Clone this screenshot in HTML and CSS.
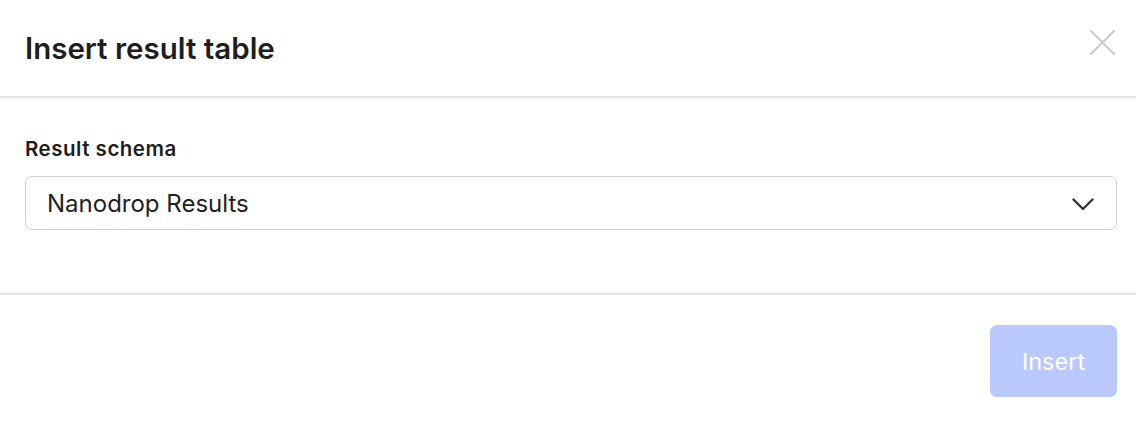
FILE: index.html
```html
<!DOCTYPE html>
<html>
<head>
<meta charset="utf-8">
<link rel="stylesheet" href="styles.css">
</head>
<body>
<div class="dialog">
  <div class="header">
    <h1 class="title">Insert result table</h1>
    <button class="close" aria-label="Close">
      <svg width="25" height="25" viewBox="0 0 25 25"><path d="M1 1L24 24M24 1L1 24" stroke="#cccccc" stroke-width="2.2" stroke-linecap="round" fill="none"/></svg>
    </button>
  </div>
  <div class="body">
    <label class="label">Result schema</label>
    <div class="select">
      <span class="select-value">Nanodrop Results</span>
      <svg class="chevron" width="22" height="13" viewBox="0 0 22 13"><path d="M1.5 1.5L11 11L20.5 1.5" stroke="#333" stroke-width="2.4" fill="none" stroke-linecap="round" stroke-linejoin="round"/></svg>
    </div>
  </div>
  <div class="footer">
    <button class="insert">Insert</button>
  </div>
</div>
</body>
</html>
```

FILE: styles.css
```css
html, body {
  margin: 0;
  padding: 0;
  background: #ffffff;
}
body {
  font-family: "Inter", "Open Sans", sans-serif;
  color: #1f1f21;
}
.dialog {
  width: 1136px;
  height: 426px;
  display: flex;
  flex-direction: column;
}
.header {
  height: 96px;
  border-bottom: 2px solid #e3e3e3;
  display: flex;
  align-items: center;
  justify-content: space-between;
  padding: 0 21px 0 25px;
  box-sizing: content-box;
}
.title {
  margin: 0;
  font-size: 29.5px;
  font-weight: 600;
  letter-spacing: 0;
  color: #1e1e20;
  line-height: 1;
  padding-top: 2px;
}
.close {
  border: 0;
  background: none;
  padding: 0;
  width: 25px;
  height: 25px;
  display: flex;
  align-self: flex-start;
  margin-top: 30px;
}
.body {
  height: 195px;
  padding: 0 19px 0 25px;
  border-bottom: 2px solid #e3e3e3;
}
.label {
  display: block;
  margin-top: 40px;
  font-size: 20.5px;
  font-weight: 600;
  letter-spacing: 0.5px;
  line-height: 22px;
  color: #1e1e20;
}
.select {
  margin-top: 16px;
  height: 54px;
  box-sizing: border-box;
  border: 1.5px solid #d0d0d0;
  border-radius: 7px;
  display: flex;
  align-items: center;
  justify-content: space-between;
  padding: 0 22px 0 21px;
}
.select-value {
  font-size: 24px;
  color: #222;
}
.chevron {
  display: block;
  margin-top: 2px;
}
.footer {
  flex: 1;
  display: flex;
  justify-content: flex-end;
  align-items: flex-start;
  padding: 30px 19px 0 25px;
}
.insert {
  width: 127px;
  height: 72px;
  border: 0;
  border-radius: 7px;
  background: #b9c9fd;
  color: #ffffff;
  font-family: "Inter", "Open Sans", sans-serif;
  font-size: 23.5px;
  padding: 0;
}
```
